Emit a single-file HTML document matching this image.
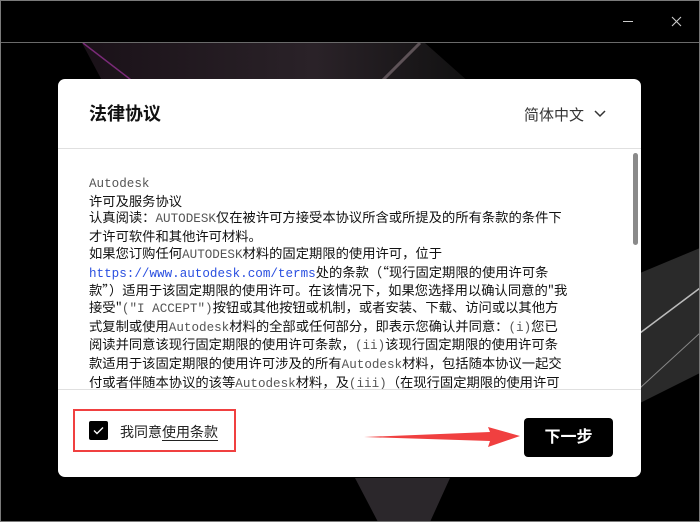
<!DOCTYPE html>
<html><head><meta charset="utf-8"><style>
*{margin:0;padding:0;box-sizing:border-box}
html,body{width:700px;height:522px;overflow:hidden;background:#000}
body{position:relative;font-family:"Liberation Sans","Noto Sans CJK SC",sans-serif}
.frame{position:absolute;left:0;top:0;width:700px;height:522px;border:1px solid #7a7a7a;z-index:5;pointer-events:none}
.tb{position:absolute;left:0;top:0;width:700px;height:43px;background:#000;border-bottom:1px solid #6a6a6a}
.bg{position:absolute;left:0;top:43px;width:700px;height:479px;overflow:hidden;background:#000}
.dlg{position:absolute;left:58px;top:79px;width:583px;height:398px;background:#fff;border-radius:7px}
.hd{position:absolute;left:31px;top:21px;font-size:18px;font-weight:bold;color:#111}
.lang{position:absolute;left:466px;top:25px;font-size:15px;color:#333}
.l1{position:absolute;left:0;top:69px;width:583px;height:1px;background:#e0e0e0}
.l2{position:absolute;left:0;top:310px;width:583px;height:1px;background:#e0e0e0}
.sb{position:absolute;left:575px;top:74px;width:5px;height:92px;background:#8a8a8a;border-radius:3px}
.txt{position:absolute;left:31px;top:95px;font-size:13.3px;line-height:16.7px;color:#111;white-space:nowrap;font-family:"Noto Sans CJK SC",sans-serif}
.m{font-family:"Liberation Mono",monospace;color:#555;font-size:12.6px}
.a{font-family:"Liberation Mono",monospace;color:#2a4fe0;font-size:12.6px}
.cb{position:absolute;left:31px;top:342px;width:19px;height:19px;background:#000;border-radius:2px}
.lbl{position:absolute;left:62px;top:343px;font-size:14px;color:#222}
.lbl u{text-decoration:none;border-bottom:1px solid #222}
.red{position:absolute;left:15px;top:330px;width:163px;height:43px;border:2px solid #f04040}
.btn{position:absolute;left:466px;top:339px;width:89px;height:39px;background:#000;border-radius:4px;color:#fff;font-size:16px;font-weight:bold;text-align:center;line-height:39px}
</style></head><body>
<div class="frame"></div>
<div class="tb">
<div style="position:absolute;left:623px;top:21px;width:10px;height:1px;background:#ccc"></div>
<svg style="position:absolute;left:671px;top:16px" width="11" height="11"><path d="M1 1L10 10M10 1L1 10" stroke="#ccc" stroke-width="1.1"/></svg>
</div>
<div class="bg">
<svg width="700" height="479" style="position:absolute;left:0;top:0">
<defs><linearGradient id="g" x1="0" y1="0" x2="1" y2="0"><stop offset="0" stop-color="#1a1118"/><stop offset=".6" stop-color="#2a2228"/><stop offset="1" stop-color="#111"/></linearGradient></defs>
<polygon points="82,0 425,0 470,40 470,90 130,90" fill="url(#g)"/>
<line x1="83" y1="0" x2="135" y2="40" stroke="#7a2a78" stroke-width="1.5"/>
<line x1="420" y1="0" x2="380" y2="40" stroke="#8a7a80" stroke-width="3" opacity=".6"/>
<polygon points="640,230 700,205 700,330 640,360" fill="#2a2a2a"/>
<line x1="640" y1="290" x2="700" y2="245" stroke="#bbb" stroke-width="1.5"/>
<line x1="640" y1="345" x2="700" y2="290" stroke="#888" stroke-width="1"/>
<polygon points="355,435 450,435 430,479 378,479" fill="#2b272b"/>
</svg>
</div>
<div class="dlg">
<div class="hd">法律协议</div>
<div class="lang">简体中文 <svg width="12" height="8" style="margin-left:6px;vertical-align:2px"><path d="M1 1L6 6L11 1" stroke="#333" stroke-width="1.5" fill="none"/></svg></div>
<div class="l1"></div>
<div class="sb"></div>
<div class="txt"><span class="m">Autodesk</span><br>许可及服务协议<br>认真阅读：<span class="m">AUTODESK</span>仅在被许可方接受本协议所含或所提及的所有条款的条件下<br>才许可软件和其他许可材料。<br>如果您订购任何<span class="m">AUTODESK</span>材料的固定期限的使用许可，位于<br><span class="a">https://www.autodesk.com/terms</span>处的条款（“现行固定期限的使用许可条<br>款”）适用于该固定期限的使用许可。在该情况下，如果您选择用以确认同意的"我<br>接受"<span class="m">("I ACCEPT")</span>按钮或其他按钮或机制，或者安装、下载、访问或以其他方<br>式复制或使用<span class="m">Autodesk</span>材料的全部或任何部分，即表示您确认并同意：<span class="m">(i)</span>您已<br>阅读并同意该现行固定期限的使用许可条款，<span class="m">(ii)</span>该现行固定期限的使用许可条<br>款适用于该固定期限的使用许可涉及的所有<span class="m">Autodesk</span>材料，包括随本协议一起交<br>付或者伴随本协议的该等<span class="m">Autodesk</span>材料，及<span class="m">(iii)</span>（在现行固定期限的使用许可</div>
<div class="l2"></div>
<div class="red"></div>
<div class="cb"><svg width="19" height="19"><path d="M5 9.5L8 12.5L14 6.5" stroke="#fff" stroke-width="1.4" fill="none"/></svg></div>
<div class="lbl">我同意<u>使用条款</u></div>
<div class="btn">下一步</div>
</div>
<svg width="700" height="522" style="position:absolute;left:0;top:0">
<polygon points="364,437 490,432 488,427 520,436 488,447 490,441" fill="#f04040"/>
</svg>
</body></html>
